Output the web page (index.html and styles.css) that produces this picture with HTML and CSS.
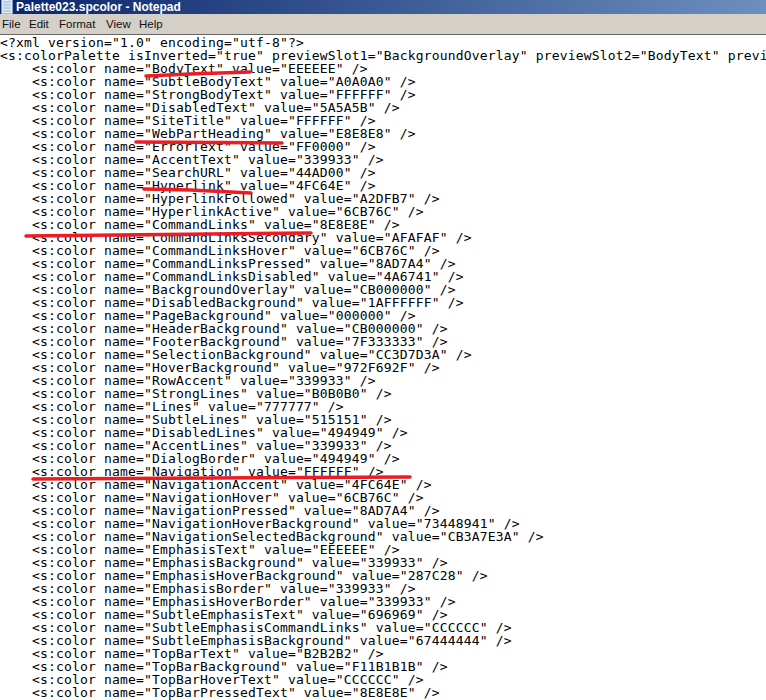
FILE: index.html
```html
<!DOCTYPE html>
<html lang="en">
<head>
<meta charset="utf-8">
<title>Palette023.spcolor - Notepad</title>
<link rel="stylesheet" href="styles.css">
</head>
<body>
<div class="window">
<header class="titlebar">
<svg class="app-icon" width="14" height="14" viewBox="0 0 14 14"><rect x="1.5" y="-1" width="11" height="15" fill="#d6e8f6" stroke="#7f9cb8"/><path d="M3.5 2h7M3.5 5h7M3.5 8h7M3.5 11h7" stroke="#9db6cc"/></svg>
<span class="title">Palette023.spcolor - Notepad</span>
</header>
<nav class="menubar"><span>File</span><span>Edit</span><span>Format</span><span>View</span><span>Help</span></nav>
<main class="editor">
<pre class="code">&lt;?xml version="1.0" encoding="utf-8"?&gt;
&lt;s:colorPalette isInverted="true" previewSlot1="BackgroundOverlay" previewSlot2="BodyText" previewSlot3="AccentText"
    &lt;s:color name="BodyText" value="EEEEEE" /&gt;
    &lt;s:color name="SubtleBodyText" value="A0A0A0" /&gt;
    &lt;s:color name="StrongBodyText" value="FFFFFF" /&gt;
    &lt;s:color name="DisabledText" value="5A5A5B" /&gt;
    &lt;s:color name="SiteTitle" value="FFFFFF" /&gt;
    &lt;s:color name="WebPartHeading" value="E8E8E8" /&gt;
    &lt;s:color name="ErrorText" value="FF0000" /&gt;
    &lt;s:color name="AccentText" value="339933" /&gt;
    &lt;s:color name="SearchURL" value="44AD00" /&gt;
    &lt;s:color name="Hyperlink" value="4FC64E" /&gt;
    &lt;s:color name="HyperlinkFollowed" value="A2DFB7" /&gt;
    &lt;s:color name="HyperlinkActive" value="6CB76C" /&gt;
    &lt;s:color name="CommandLinks" value="8E8E8E" /&gt;
    &lt;s:color name="CommandLinksSecondary" value="AFAFAF" /&gt;
    &lt;s:color name="CommandLinksHover" value="6CB76C" /&gt;
    &lt;s:color name="CommandLinksPressed" value="8AD7A4" /&gt;
    &lt;s:color name="CommandLinksDisabled" value="4A6741" /&gt;
    &lt;s:color name="BackgroundOverlay" value="CB000000" /&gt;
    &lt;s:color name="DisabledBackground" value="1AFFFFFF" /&gt;
    &lt;s:color name="PageBackground" value="000000" /&gt;
    &lt;s:color name="HeaderBackground" value="CB000000" /&gt;
    &lt;s:color name="FooterBackground" value="7F333333" /&gt;
    &lt;s:color name="SelectionBackground" value="CC3D7D3A" /&gt;
    &lt;s:color name="HoverBackground" value="972F692F" /&gt;
    &lt;s:color name="RowAccent" value="339933" /&gt;
    &lt;s:color name="StrongLines" value="B0B0B0" /&gt;
    &lt;s:color name="Lines" value="777777" /&gt;
    &lt;s:color name="SubtleLines" value="515151" /&gt;
    &lt;s:color name="DisabledLines" value="494949" /&gt;
    &lt;s:color name="AccentLines" value="339933" /&gt;
    &lt;s:color name="DialogBorder" value="494949" /&gt;
    &lt;s:color name="Navigation" value="FFFFFF" /&gt;
    &lt;s:color name="NavigationAccent" value="4FC64E" /&gt;
    &lt;s:color name="NavigationHover" value="6CB76C" /&gt;
    &lt;s:color name="NavigationPressed" value="8AD7A4" /&gt;
    &lt;s:color name="NavigationHoverBackground" value="73448941" /&gt;
    &lt;s:color name="NavigationSelectedBackground" value="CB3A7E3A" /&gt;
    &lt;s:color name="EmphasisText" value="EEEEEE" /&gt;
    &lt;s:color name="EmphasisBackground" value="339933" /&gt;
    &lt;s:color name="EmphasisHoverBackground" value="287C28" /&gt;
    &lt;s:color name="EmphasisBorder" value="339933" /&gt;
    &lt;s:color name="EmphasisHoverBorder" value="339933" /&gt;
    &lt;s:color name="SubtleEmphasisText" value="696969" /&gt;
    &lt;s:color name="SubtleEmphasisCommandLinks" value="CCCCCC" /&gt;
    &lt;s:color name="SubtleEmphasisBackground" value="67444444" /&gt;
    &lt;s:color name="TopBarText" value="B2B2B2" /&gt;
    &lt;s:color name="TopBarBackground" value="F11B1B1B" /&gt;
    &lt;s:color name="TopBarHoverText" value="CCCCCC" /&gt;
    &lt;s:color name="TopBarPressedText" value="8E8E8E" /&gt;</pre>
<svg class="marks" width="766" height="665" viewBox="0 0 766 665" fill="none" stroke="#ed1c24" stroke-width="3.5" stroke-linecap="round" stroke-linejoin="round">
<path d="M146 41 L190 39 L250 37"/>
<path d="M136 107 L282 108"/>
<path d="M144 154 L190 155 L251 158"/>
<path d="M26 201 L311 198"/>
<path d="M33 444 L410 442"/>
</svg>
</main>
</div>
</body>
</html>
```
FILE: styles.css
```css
html, body { margin: 0; padding: 0; background: #fff; }
body { width: 766px; height: 700px; overflow: hidden; }
.window { display: flex; flex-direction: column; height: 700px; }
.titlebar { display: flex; align-items: center; gap: 2px; height: 14px; background: linear-gradient(90deg, #0a246a, #6c8fbf); flex: none; overflow: hidden; }
.app-icon { flex: none; }
.title { font: bold 12px/14px "Liberation Sans", sans-serif; color: #fff; }
.menubar { display: grid; grid-template-columns: 27px 30px 47px 33px auto; height: 20px; padding-left: 2px; align-items: center; background: #d4d0c8; font: 11.5px "Liberation Sans", sans-serif; color: #111; flex: none; }
.editor { position: relative; flex: 1; overflow: hidden; border-top: 1px solid #666; }
.code { margin: 0; padding-top: 1px; font: 13px/13px "DejaVu Sans Mono", monospace; letter-spacing: 0.17px; color: #000; white-space: pre; }
.marks { position: absolute; left: 0; top: 0; }
```
